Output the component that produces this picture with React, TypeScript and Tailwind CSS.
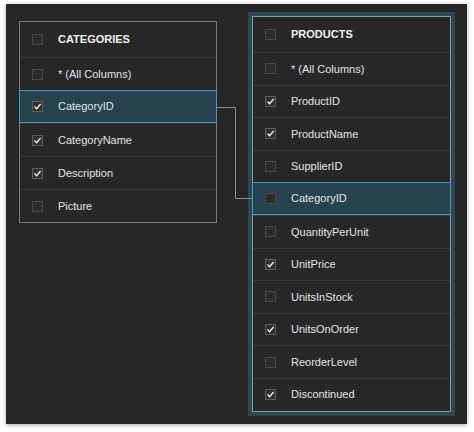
import React from 'react';

type Field = { name: string; checked: boolean; active?: boolean };

const categories: Field[] = [
  { name: '* (All Columns)', checked: false },
  { name: 'CategoryID', checked: true, active: true },
  { name: 'CategoryName', checked: true },
  { name: 'Description', checked: true },
  { name: 'Picture', checked: false },
];

const products: Field[] = [
  { name: '* (All Columns)', checked: false },
  { name: 'ProductID', checked: true },
  { name: 'ProductName', checked: true },
  { name: 'SupplierID', checked: false },
  { name: 'CategoryID', checked: false, active: true },
  { name: 'QuantityPerUnit', checked: false },
  { name: 'UnitPrice', checked: true },
  { name: 'UnitsInStock', checked: false },
  { name: 'UnitsOnOrder', checked: true },
  { name: 'ReorderLevel', checked: false },
  { name: 'Discontinued', checked: true },
];

function Check({ checked }: { checked: boolean }) {
  return (
    <span
      className={`w-[11px] h-[11px] shrink-0 flex items-center justify-center border ${
        checked ? 'border-[#5e5e5e] bg-[#303030]' : 'border-[#484848] bg-[#2c2c2c]'
      }`}
    >
      {checked && (
        <svg width="9" height="9" viewBox="0 0 9 9" fill="none">
          <path d="M1.5 4.6 L3.6 6.7 L7.6 2" stroke="#f0f0f0" strokeWidth="1.4" />
        </svg>
      )}
    </span>
  );
}

function Row({ field, rowH }: { field: Field; rowH: string }) {
  return (
    <div
      className={`${rowH} flex items-center gap-[15px] pl-[12px] text-[11px] text-[#e4e4e4] ${
        field.active
          ? 'bg-[#25424e] border-[1.5px] border-[#3e9cc2] -mx-px pl-[12px]'
          : 'border-t border-[#3a3a3a]'
      }`}
    >
      <Check checked={field.checked} />
      <span>{field.name}</span>
    </div>
  );
}

function Table({ title, fields, rowH }: { title: string; fields: Field[]; rowH: string }) {
  return (
    <div className="bg-[#272727]">
      <div className="h-[35px] flex items-center gap-[15px] pl-[12px] text-[11px] font-bold text-[#f2f2f2]">
        <Check checked={false} />
        <span>{title}</span>
      </div>
      {fields.map((f, i) => (
        <Row key={i} field={f} rowH={rowH} />
      ))}
    </div>
  );
}

export default function App() {
  return (
    <div
      className="w-[474px] h-[432px] bg-white pl-[6px] pt-[4px]"
      style={{ fontFamily: '"Liberation Sans", Arial, sans-serif' }}
    >
      <div className="relative w-[461px] h-[420px] bg-[#262626] shadow-[0_1px_4px_rgba(0,0,0,0.35)] flex items-start">
        <div className="ml-[13px] mt-[17px] w-[198px] border border-[#7a7a7a]">
          <Table title="CATEGORIES" fields={categories} rowH="h-[33px]" />
        </div>

        <div className="ml-[31px] mt-[8px] w-[207px] border-[4px] border-[#2d4650]">
          <div className="border border-[#8a9ba2]">
            <Table title="PRODUCTS" fields={products} rowH="h-[32.6px]" />
          </div>
        </div>

        <svg className="absolute left-0 top-0 pointer-events-none" width="461" height="420">
          <path d="M211 103.5 H229.5 V194.5 H246" fill="none" stroke="#8c8c8c" strokeWidth="1" />
        </svg>
      </div>
    </div>
  );
}
